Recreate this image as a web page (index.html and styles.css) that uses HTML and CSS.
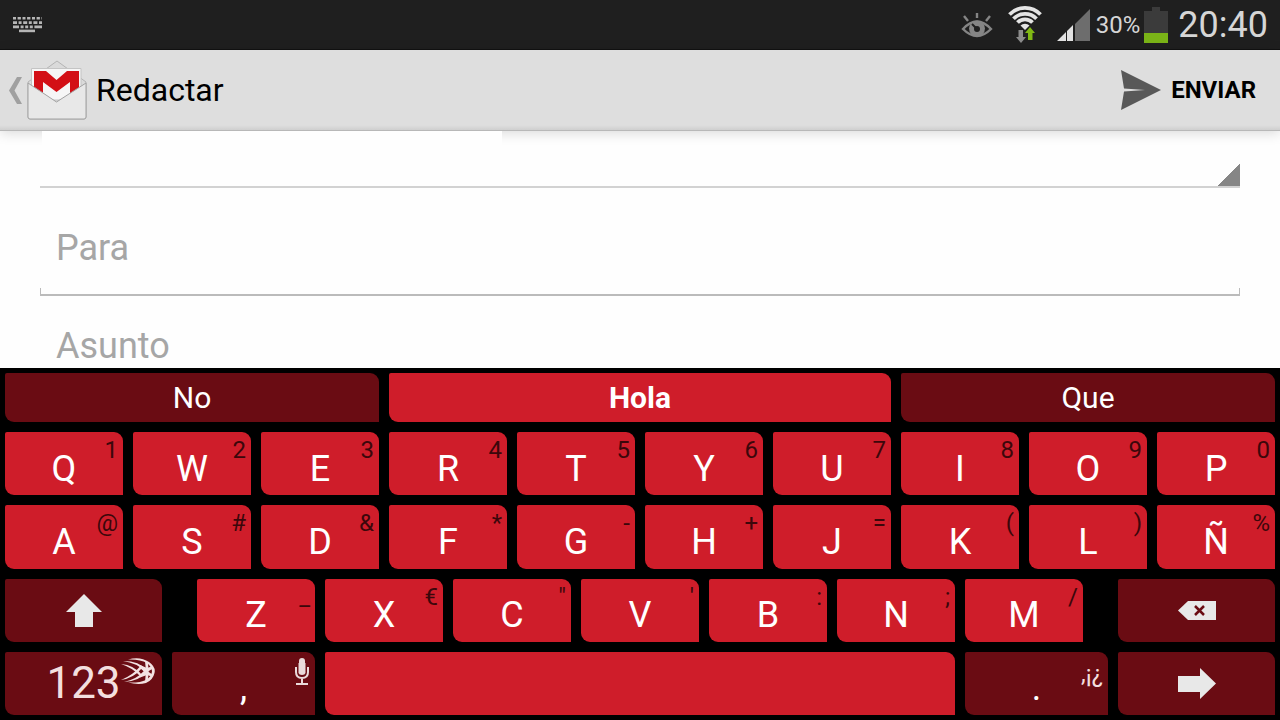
FILE: index.html
```
<!DOCTYPE html>
<html lang="es">
<head>
  <meta charset="UTF-8">
  <meta name="viewport" content="width=device-width, initial-scale=1">
  <title>Redactar</title>
  <link rel="stylesheet" href="styles.css">
</head>
<body>
  <div class="status-bar">
    <svg class="keyboard-icon" width="30" height="18" viewBox="0 0 30 18" aria-hidden="true">
      <g fill="none" stroke="#b5b5b5" stroke-width="2.6">
        <path d="M1 2.3H30" stroke-dasharray="3 1.6 3.3 1.6"/>
        <path d="M1 6.6H30" stroke-dasharray="4 1.6 3 1.6"/>
        <path d="M1 10.9H30" stroke-dasharray="6 1.6 3 1.6 3 1.6 3 1.6 7.6"/>
        <path d="M7 14.9H23"/>
      </g>
    </svg>
    <div class="status-icons">
      <svg width="32" height="28" viewBox="0 0 32 28" aria-hidden="true">
        <g fill="none" stroke="#858585" stroke-width="2.4">
          <path d="M2 18Q16 3 30 18Q16 32 2 18Z"/>
          <path d="M3 5L7 10M16 2V7M29 5L25 10"/>
        </g>
        <circle cx="16" cy="17.500" r="8" fill="#858585"/>
        <path d="M11 13L16 18" stroke="#1f1f1f" stroke-width="2"/>
        <circle cx="16" cy="18" r="3" fill="#1f1f1f"/>
      </svg>
      <svg class="wifi-icon" width="36" height="38" viewBox="0 0 36 38" aria-hidden="true">
        <g fill="none" stroke="#e4e4e4" stroke-width="3.8">
          <path d="M2.500 8.500A21.500 21.500 0 0 1 33.500 8.500"/>
          <path d="M6.500 12.800A16 16 0 0 1 29.500 12.800"/>
          <path d="M10.500 16.500A10.500 10.500 0 0 1 25.500 16.500"/>
        </g>
        <path d="M13.500 19.500A6.500 6.500 0 0 1 22.500 19.500L18 24Z" fill="#e4e4e4"/>
        <path d="M11.500 24H16V31H19L14 37L9 31H11.500Z" fill="#8c8c8c"/>
        <path d="M21 34V27H18L23 21L28 27H25.500V34Z" fill="#80b814"/>
      </svg>
      <svg width="33" height="33" viewBox="0 0 33 33" aria-hidden="true">
        <path d="M0 33L9 24V33ZM10 23L16 17V33H10Z" fill="#e2e2e2"/>
        <path d="M18 16L33 1V33H18Z" fill="#6d6d6d"/>
      </svg>
      <span class="battery-text">30%</span>
      <svg width="24" height="36" viewBox="0 0 24 36" aria-hidden="true">
        <path d="M8 0H16V4H24V36H0V4H8Z" fill="#3b3b3b"/>
        <path d="M0 26H24V36H0Z" fill="#7ab317"/>
      </svg>
      <span class="clock">20:40</span>
    </div>
  </div>

  <header class="app-bar">
    <button class="back" type="button" aria-label="Atrás">
      <svg width="80" height="60" viewBox="0 0 80 60" aria-hidden="true">
        <path d="M9 17H14L6.500 30.500L14 44H9L1 30.500Z" fill="#a0a0a0"/>
        <path d="M20 22L49 1L78 22V57Q78 59 76 59H22Q20 59 20 57Z" fill="#dadada" stroke="#b4b4b4"/>
        <path d="M23.500 8.500H73V40H23.500Z" fill="#f6f6f6" stroke="#c4c4c4"/>
        <path d="M26 11H38L48.500 20L59 11H71V38H62V22L48.500 32L35 22V38H26Z" fill="#d30f16"/>
        <path d="M20 23L48.500 42L78 23V57Q78 59 76 59H22Q20 59 20 57Z" fill="#e8e8e8" stroke="#a2a2a2"/>
      </svg>
    </button>
    <h1>Redactar</h1>
    <button class="send" type="button">
      <svg width="40" height="40" viewBox="0 0 40 40" aria-hidden="true">
        <path d="M0 0L40 20L0 40L3 21.500L24 20L3 18.500Z" fill="#585858"/>
      </svg>
      ENVIAR
    </button>
  </header>

  <form class="compose">
    <select class="account" aria-label="De"><option></option></select>
    <input class="to" type="text" placeholder="Para" aria-label="Para">
    <input class="subject" type="text" placeholder="Asunto" aria-label="Asunto">
  </form>

  <div class="keyboard">
    <div class="row suggestions">
      <button class="key dark" type="button">No</button>
      <button class="key best" type="button">Hola</button>
      <button class="key dark" type="button">Que</button>
    </div>
    <div class="row letters">
      <button class="key" type="button">Q<span class="hint">1</span></button>
      <button class="key" type="button">W<span class="hint">2</span></button>
      <button class="key" type="button">E<span class="hint">3</span></button>
      <button class="key" type="button">R<span class="hint">4</span></button>
      <button class="key" type="button">T<span class="hint">5</span></button>
      <button class="key" type="button">Y<span class="hint">6</span></button>
      <button class="key" type="button">U<span class="hint">7</span></button>
      <button class="key" type="button">I<span class="hint">8</span></button>
      <button class="key" type="button">O<span class="hint">9</span></button>
      <button class="key" type="button">P<span class="hint">0</span></button>
    </div>
    <div class="row letters">
      <button class="key" type="button">A<span class="hint">@</span></button>
      <button class="key" type="button">S<span class="hint">#</span></button>
      <button class="key" type="button">D<span class="hint">&amp;</span></button>
      <button class="key" type="button">F<span class="hint">*</span></button>
      <button class="key" type="button">G<span class="hint">-</span></button>
      <button class="key" type="button">H<span class="hint">+</span></button>
      <button class="key" type="button">J<span class="hint">=</span></button>
      <button class="key" type="button">K<span class="hint">(</span></button>
      <button class="key" type="button">L<span class="hint">)</span></button>
      <button class="key" type="button">Ñ<span class="hint">%</span></button>
    </div>
    <div class="row shift-row">
      <button class="key dark icon-key" type="button" aria-label="Mayúsculas">
        <svg width="36" height="33" viewBox="0 0 36 33" aria-hidden="true">
          <path d="M18 0L36 18H27V33H9V18H0Z" fill="#e8e8e8"/>
        </svg>
      </button>
      <span></span>
      <button class="key" type="button">Z<span class="hint">_</span></button>
      <button class="key" type="button">X<span class="hint">€</span></button>
      <button class="key" type="button">C<span class="hint">"</span></button>
      <button class="key" type="button">V<span class="hint">'</span></button>
      <button class="key" type="button">B<span class="hint">:</span></button>
      <button class="key" type="button">N<span class="hint">;</span></button>
      <button class="key" type="button">M<span class="hint">/</span></button>
      <span></span>
      <button class="key dark icon-key" type="button" aria-label="Borrar">
        <svg width="38" height="19" viewBox="0 0 38 19" aria-hidden="true">
          <path d="M0 9.500L10 0H38V19H10Z" fill="#e8e8e8"/>
          <path d="M17 5L26 14M26 5L17 14" stroke="#6a0c13" stroke-width="2.500"/>
        </svg>
      </button>
    </div>
    <div class="row space-row">
      <button class="key dark numbers" type="button">123
        <svg class="corner" width="36" height="27" viewBox="0 0 36 27" aria-hidden="true">
          <!-- comet tails running into the ball -->
          <g fill="#f3e2e2">
            <path d="M8 1.500Q20 -2 29 4Q36 9 34.500 15Q33 22 26 25Q18 27 8 24.500Q20 25 26 22Q32 18 32 13Q31 8 27 5Q20 1 8 1.500Z"/>
            <path d="M3 3Q20 3 26 12L24 13Q17 5 3 3Z"/>
            <path d="M1 6Q14 7 22 17L20 18Q13 10 1 6Z"/>
            <path d="M1 22Q14 20 22 10L20 8.500Q13 17 1 22Z"/>
            <path d="M4 24Q20 23 26 14L24 13Q17 21 4 24Z"/>
            <path d="M20 7L27 10L33 8V10.500L28 13.500L33 17V19L27 17L20 19.500V17L24 13.500L20 10Z"/>
            <path d="M25 3L28 4L28.500 13H26ZM25 24L28 23L28.500 13H26Z"/>
          </g>
        </svg>
      </button>
      <button class="key dark" type="button">,
        <svg class="corner" width="14" height="28" viewBox="0 0 14 28" aria-hidden="true">
          <rect x="4" y="0" width="6" height="9" rx="3" fill="#eadada"/>
          <path d="M3.500 5H10.500V15Q10 17 7 17Q4 17 3.500 15Z" fill="#eadada"/>
          <path d="M1 9V14Q1 20 7 20Q13 20 13 14V9M7 20V26M1 26H13" fill="none" stroke="#eadada" stroke-width="2"/>
        </svg>
      </button>
      <button class="key" type="button" aria-label="Espacio"></button>
      <button class="key dark" type="button">.<span class="hint">,¡¿</span></button>
      <button class="key dark icon-key" type="button" aria-label="Siguiente">
        <svg width="38" height="31" viewBox="0 0 38 31" aria-hidden="true">
          <path d="M0 8H22V0L38 15.500L22 31V24H0Z" fill="#e8e8e8"/>
        </svg>
      </button>
    </div>
  </div>
</body>
</html>
```
FILE: styles.css
```
* {
  box-sizing: border-box;
}
body {
  margin: 0;
  min-height: 100vh;
  display: flex;
  flex-direction: column;
  background: #fefefe;
  font-family: Roboto, "Liberation Sans", sans-serif;
}
svg {
  display: block;
  flex: none;
}
button,
input,
select {
  font-family: inherit;
  margin: 0;
  padding: 0;
  border: 0;
  border-radius: 0;
  background: none;
}

/* Status bar */
.status-bar {
  height: 50px;
  display: flex;
  align-items: center;
  justify-content: space-between;
  padding: 0 12px;
  background: #1f1f1f;
  border-bottom: 1px solid #111;
  color: #d6d6d6;
}
.status-icons {
  display: flex;
  align-items: center;
  gap: 4px;
}
.wifi-icon {
  margin: 0 10px;
}
.battery-text {
  margin-left: 2px;
  font-size: 24px;
}
.clock {
  margin-left: 6px;
  font-size: 36px;
}

/* App bar */
.app-bar {
  position: relative;
  height: 81px;
  display: flex;
  align-items: center;
  padding: 0 24px 0 8px;
  background: linear-gradient(#dedede 94%, #cfcfcf);
  border-bottom: 1px solid #b8b8b8;
  box-shadow: 0 2px 12px rgba(0, 0, 0, 0.15);
}
.app-bar h1 {
  flex: 1;
  margin: 0 0 0 8px;
  font-size: 32px;
  font-weight: 400;
  color: #000;
}
.send {
  display: flex;
  align-items: center;
  gap: 10px;
  font-size: 24px;
  font-weight: 700;
  color: #000;
}

/* Compose form */
.compose {
  flex: 1;
  display: flex;
  flex-direction: column;
  padding: 0 40px;
}
.account {
  position: relative;
  height: 57px;
  appearance: none;
  border-bottom: 2px solid #d2d2d2;
  background:
    linear-gradient(135deg, transparent 50%, #868686 50%) right bottom / 25px 25px no-repeat border-box,
    linear-gradient(#fefefe, #fefefe) 2px 0 / 460px 40px no-repeat;
}
.to,
.subject {
  padding: 0 16px;
  font-size: 36px;
  color: #000;
}
.to::placeholder,
.subject::placeholder {
  color: #a6a6a6;
  opacity: 1;
}
.to {
  height: 108px;
  padding-top: 12px;
  background:
    linear-gradient(#bbb, #bbb) left bottom / 1px 8px no-repeat,
    linear-gradient(#bbb, #bbb) right bottom / 1px 8px no-repeat,
    linear-gradient(#bbb, #bbb) left bottom / 100% 2px no-repeat;
}
.subject {
  height: 72px;
  padding-top: 28px;
}

/* Keyboard */
.keyboard {
  height: 352px;
  display: grid;
  grid-template-rows: 49px repeat(4, 1fr);
  gap: 10px;
  padding: 5px;
  background: #000;
}
.row {
  display: grid;
  gap: 10px;
}
.suggestions {
  grid-template-columns: 374fr 502fr 374fr;
}
.letters {
  grid-template-columns: repeat(10, 1fr);
}
.shift-row {
  grid-template-columns: 157fr 15fr repeat(7, 118fr) 15fr 157fr;
}
.space-row {
  grid-template-columns: 157fr 143fr 630fr 143fr 157fr;
}
.key {
  position: relative;
  display: flex;
  align-items: center;
  justify-content: center;
  padding-top: 10px;
  border-radius: 2px 9px 0 9px;
  background: #cf1d2a;
  color: #fff;
  font-size: 36px;
  line-height: 40px;
}
.dark {
  background: #6a0c13;
}
.suggestions .key {
  padding: 0;
  font-size: 30px;
}
.suggestions .best {
  font-weight: 700;
}
.icon-key {
  padding: 0;
}
.numbers {
  padding: 0;
  font-size: 44px;
  color: #f3dfdf;
}
.hint {
  position: absolute;
  top: 4px;
  right: 5px;
  font-size: 24px;
  line-height: 28px;
  color: #3c070b;
}
.dark .hint {
  top: 8px;
  color: #f3dfdf;
}
.corner {
  position: absolute;
  top: 6px;
  right: 6px;
}
```
